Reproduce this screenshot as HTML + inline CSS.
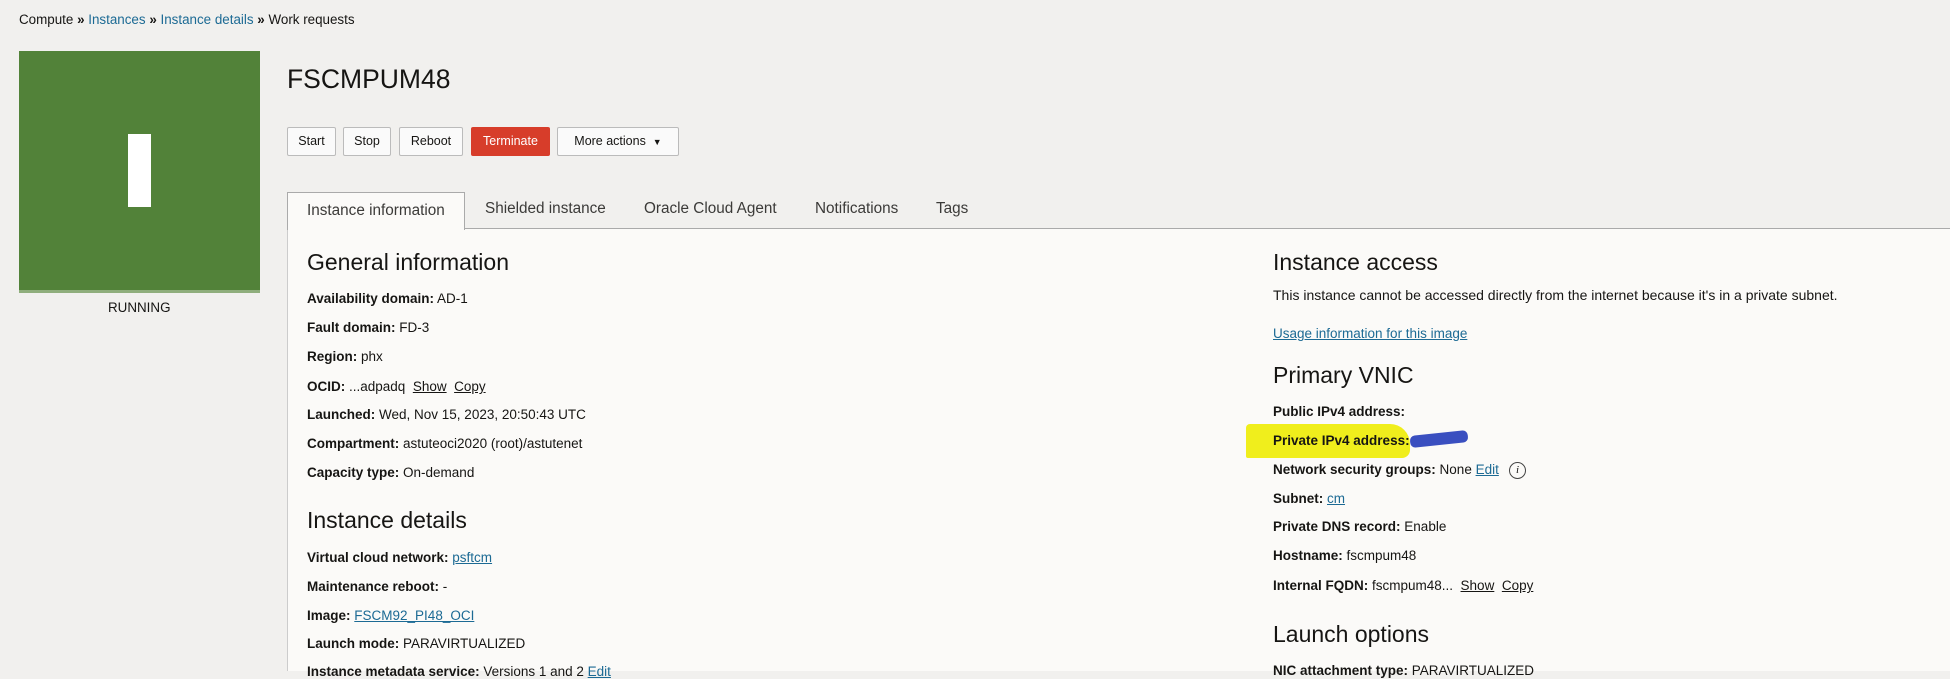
<!DOCTYPE html>
<html><head><meta charset="utf-8"><style>
*{margin:0;padding:0;box-sizing:border-box}
body{width:1950px;height:671px;overflow:hidden;background:#f1f0ee;font-family:"Liberation Sans",Arial,sans-serif;color:#161513;position:relative}
.a{position:absolute;white-space:nowrap}
.bc{top:12px;left:19px;font-size:13.4px;color:#161513}
.bc span{color:#1c6a94}
.green{left:19px;top:51px;width:241px;height:242px;background:#528239;border-bottom:3px solid #8fae7c}
.bar{left:128px;top:134px;width:23px;height:73px;background:#fff}
.run{left:108px;top:300px;font-size:13.4px}
h1{position:absolute;left:287px;top:64px;font-size:26.5px;font-weight:normal}
.btn{position:absolute;top:127px;height:29px;border:1px solid #bbb;border-radius:2px;background:#fafafa;font-size:12.5px;line-height:27px;text-align:center;color:#161513}
.term{background:#d73d2a;border-color:#d73d2a;color:#fff}
.tabs{position:absolute;left:287px;top:228px;right:0;border-top:1px solid #aaa}
.tab{top:192px;height:38px;left:287px;width:178px;background:#fbfaf8;border:1px solid #aaa;border-bottom:none;z-index:2}
.tl{font-size:15.3px;top:200px;color:#3b3a38}
.panel{left:287px;top:229px;right:0;bottom:0;background:#fbfaf8;border-left:1px solid #ccc}
.h2{font-size:23px;font-weight:normal}
.r{font-size:13.5px}
.r b{font-weight:bold}
.lk{color:#1c6a94;text-decoration:underline}
.sc{color:#161513;text-decoration:underline}
</style></head><body>
<div class="a bc">Compute <b>»</b> <span>Instances</span> <b>»</b> <span>Instance details</span> <b>»</b> Work requests</div>
<div class="a green"></div><div class="a bar"></div>
<div class="a run">RUNNING</div>
<h1>FSCMPUM48</h1>
<div class="btn" style="left:287px;width:49px">Start</div>
<div class="btn" style="left:343px;width:48px">Stop</div>
<div class="btn" style="left:399px;width:64px">Reboot</div>
<div class="btn term" style="left:471px;width:79px">Terminate</div>
<div class="btn" style="left:557px;width:122px">More actions &nbsp;<span style="font-size:9px">▼</span></div>
<div class="a panel"></div>
<div class="tabs"></div>
<div class="a tab"></div>
<div class="a tl" style="left:307px;top:202px;z-index:3">Instance information</div>
<div class="a tl" style="left:485px">Shielded instance</div>
<div class="a tl" style="left:644px">Oracle Cloud Agent</div>
<div class="a tl" style="left:815px">Notifications</div>
<div class="a tl" style="left:936px">Tags</div>

<div class="a h2" style="left:307px;top:249px">General information</div>
<div class="a r" style="left:307px;top:291px"><b>Availability domain:</b> AD-1</div>
<div class="a r" style="left:307px;top:320px"><b>Fault domain:</b> FD-3</div>
<div class="a r" style="left:307px;top:349px"><b>Region:</b> phx</div>
<div class="a r" style="left:307px;top:379px"><b>OCID:</b> ...adpadq &nbsp;<span class="sc">Show</span> &nbsp;<span class="sc">Copy</span></div>
<div class="a r" style="left:307px;top:407px"><b>Launched:</b> Wed, Nov 15, 2023, 20:50:43 UTC</div>
<div class="a r" style="left:307px;top:436px"><b>Compartment:</b> astuteoci2020 (root)/astutenet</div>
<div class="a r" style="left:307px;top:465px"><b>Capacity type:</b> On-demand</div>
<div class="a h2" style="left:307px;top:507px">Instance details</div>
<div class="a r" style="left:307px;top:550px"><b>Virtual cloud network:</b> <span class="lk">psftcm</span></div>
<div class="a r" style="left:307px;top:579px"><b>Maintenance reboot:</b> -</div>
<div class="a r" style="left:307px;top:608px"><b>Image:</b> <span class="lk">FSCM92_PI48_OCI</span></div>
<div class="a r" style="left:307px;top:636px"><b>Launch mode:</b> PARAVIRTUALIZED</div>
<div class="a r" style="left:307px;top:664px"><b>Instance metadata service:</b> Versions 1 and 2 <span class="lk">Edit</span></div>

<div class="a h2" style="left:1273px;top:249px">Instance access</div>
<div class="a r" style="left:1273px;top:287px;font-size:14px">This instance cannot be accessed directly from the internet because it's in a private subnet.</div>
<div class="a r lk" style="left:1273px;top:326px">Usage information for this image</div>
<div class="a h2" style="left:1273px;top:362px">Primary VNIC</div>
<div class="a r" style="left:1273px;top:404px"><b>Public IPv4 address:</b></div>
<div class="a" style="left:1246px;top:424px;width:164px;height:34px;background:#f0ee1c;border-radius:4px 20px 8px 2px"></div>
<div class="a" style="left:1410px;top:433px;width:58px;height:12px;background:#3a4fc0;border-radius:5px;transform:rotate(-6deg)"></div>
<div class="a r" style="left:1273px;top:433px"><b>Private IPv4 address:</b></div>
<div class="a r" style="left:1273px;top:462px"><b>Network security groups:</b> None <span class="lk">Edit</span></div>
<div class="a" style="left:1509px;top:462px;width:17px;height:17px;border:1.5px solid #444;border-radius:50%;font:italic 11px 'Liberation Serif',serif;text-align:center;line-height:14px">i</div>
<div class="a r" style="left:1273px;top:491px"><b>Subnet:</b> <span class="lk">cm</span></div>
<div class="a r" style="left:1273px;top:519px"><b>Private DNS record:</b> Enable</div>
<div class="a r" style="left:1273px;top:548px"><b>Hostname:</b> fscmpum48</div>
<div class="a r" style="left:1273px;top:578px"><b>Internal FQDN:</b> fscmpum48... &nbsp;<span class="sc">Show</span> &nbsp;<span class="sc">Copy</span></div>
<div class="a h2" style="left:1273px;top:621px">Launch options</div>
<div class="a r" style="left:1273px;top:663px"><b>NIC attachment type:</b> PARAVIRTUALIZED</div>
</body></html>
